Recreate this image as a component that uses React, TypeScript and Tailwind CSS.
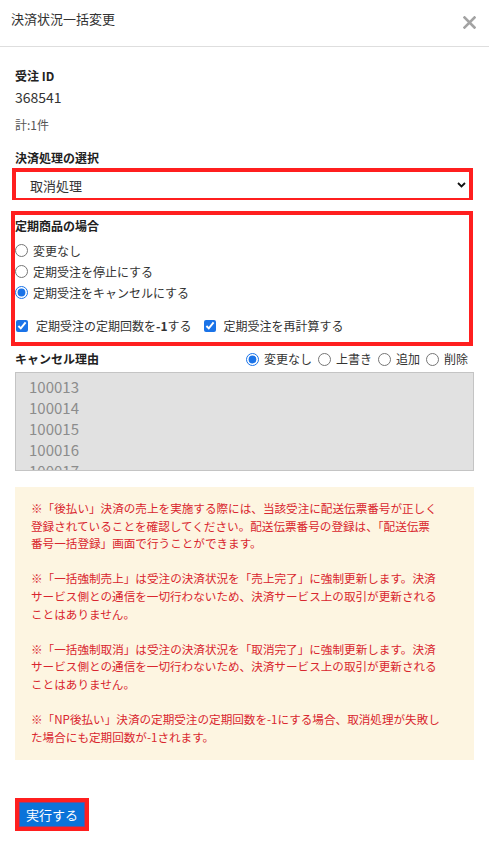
import React from 'react'

const font = { fontFamily: '"Noto Sans CJK JP", "Noto Sans", sans-serif' }

const reasonOptions = ['変更なし', '上書き', '追加', '削除']

const notes = [
  [
    '※「後払い」決済の売上を実施する際には、当該受注に配送伝票番号が正しく',
    '登録されていることを確認してください。配送伝票番号の登録は、「配送伝票',
    '番号一括登録」画面で行うことができます。',
  ],
  [
    '※「一括強制売上」は受注の決済状況を「売上完了」に強制更新します。決済',
    'サービス側との通信を一切行わないため、決済サービス上の取引が更新される',
    'ことはありません。',
  ],
  [
    '※「一括強制取消」は受注の決済状況を「取消完了」に強制更新します。決済',
    'サービス側との通信を一切行わないため、決済サービス上の取引が更新される',
    'ことはありません。',
  ],
  [
    '※「NP後払い」決済の定期受注の定期回数を-1にする場合、取消処理が失敗し',
    'た場合にも定期回数が-1されます。',
  ],
]

function CloseIcon() {
  return (
    <svg width="13" height="13" viewBox="0 0 13 13" className="block">
      <path d="M1.5 1.5 L11.5 11.5 M11.5 1.5 L1.5 11.5" stroke="#a3a3a3" strokeWidth="2.6" strokeLinecap="square" />
    </svg>
  )
}

function Radio({ name, label, checked }: { name: string; label: string; checked?: boolean }) {
  return (
    <label className="flex h-[21px] items-center gap-[5px] text-[12px] text-[#333]">
      <input type="radio" name={name} defaultChecked={checked} className="m-0 size-[13px] accent-[#1a73e8]" />
      {label}
    </label>
  )
}

function Check({ label }: { label: React.ReactNode }) {
  return (
    <label className="flex h-[21px] items-center gap-[8px] text-[12px] text-[#333]">
      <input type="checkbox" defaultChecked className="m-0 ml-[1px] size-[12px] accent-[#1a73e8]" />
      {label}
    </label>
  )
}

export default function App() {
  return (
    <div className="min-h-[842px] w-[489px] bg-white" style={font}>
      <header className="flex h-[47px] items-start justify-between border-b border-[#dedede] pl-[11px] pr-[13px]">
        <h1 className="pt-[10px] text-[13px] leading-[18px] font-normal text-[#333]">決済状況一括変更</h1>
        <button className="mt-[16px]" aria-label="閉じる">
          <CloseIcon />
        </button>
      </header>

      <div className="px-[15px]">
        <div className="mt-[20px] text-[12px] leading-[18px] font-bold text-[#222]">受注 ID</div>
        <div className="mt-[3px] text-[14px] leading-[18px] text-[#333]">368541</div>
        <div className="mt-[10px] text-[12px] leading-[18px] text-[#555]">計:1件</div>

        <div className="mt-[15px] text-[12px] leading-[18px] font-bold text-[#222]">決済処理の選択</div>
        <div className="relative mt-[1px] -ml-[3px] mr-[1px] h-[32px] border-4 border-[#ff1f1f] bg-white">
          <select
            defaultValue="cancel"
            className="h-full w-full appearance-none bg-white pl-[14px] text-[13px] text-[#333] outline-none"
          >
            <option value="cancel">取消処理</option>
            <option value="sale">売上処理</option>
          </select>
          <svg width="9" height="6" viewBox="0 0 9 6" className="pointer-events-none absolute top-[10px] right-[3px]">
            <path d="M1 1 L4.5 4.5 L8 1" fill="none" stroke="#111" strokeWidth="1.8" />
          </svg>
        </div>

        <div className="mt-[11px] -ml-[4px] mr-[1px] border-4 border-[#ff1f1f] pt-[2px] pb-[6px]">
          <div className="text-[12px] leading-[18px] font-bold text-[#222]">定期商品の場合</div>
          <div className="mt-[5px] flex flex-col">
            <Radio name="teiki" label="変更なし" />
            <Radio name="teiki" label="定期受注を停止にする" />
            <Radio name="teiki" label="定期受注をキャンセルにする" checked />
          </div>
          <div className="mt-[12px] flex items-center gap-[11px]">
            <Check
              label={
                <span>
                  定期受注の定期回数を<b>-1</b>する
                </span>
              }
            />
            <Check label="定期受注を再計算する" />
          </div>
        </div>

        <div className="mt-[3px] flex h-[20px] items-center justify-between pr-[6px]">
          <span className="text-[12px] font-bold text-[#222]">キャンセル理由</span>
          <div className="flex items-center gap-[6px]">
            {reasonOptions.map((o, i) => (
              <Radio key={o} name="reason" label={o} checked={i === 0} />
            ))}
          </div>
        </div>

        <textarea
          readOnly
          className="mt-[3px] block h-[99px] w-[459px] resize-none overflow-hidden border border-[#c4c4c4] bg-[#e1e1e1] pt-[3px] pl-[13px] text-[15px] leading-[21px] text-[#8c8c8c] outline-none"
          defaultValue={'100013\n100014\n100015\n100016\n100017\n100018\n100019'}
        />

        <div className="mt-[16px] w-[459px] bg-[#fdf5e1] pt-[13px] pb-[14px] pl-[16px] text-[11.6px] leading-[17.6px] text-[#d9262e]">
          {notes.map((p, i) => (
            <p key={i} className={i > 0 ? 'mt-[17.6px] whitespace-nowrap' : 'whitespace-nowrap'}>
              {p.map((line, j) => (
                <span key={j} className="block">
                  {line}
                </span>
              ))}
            </p>
          ))}
        </div>

        <div className="mt-[38px] inline-flex border-4 border-[#ff1f1f]">
          <button className="h-[25px] border border-[#7a4a8a] bg-[#0b73d9] px-[6px] text-[13px] text-white">実行する</button>
        </div>
      </div>
    </div>
  )
}
